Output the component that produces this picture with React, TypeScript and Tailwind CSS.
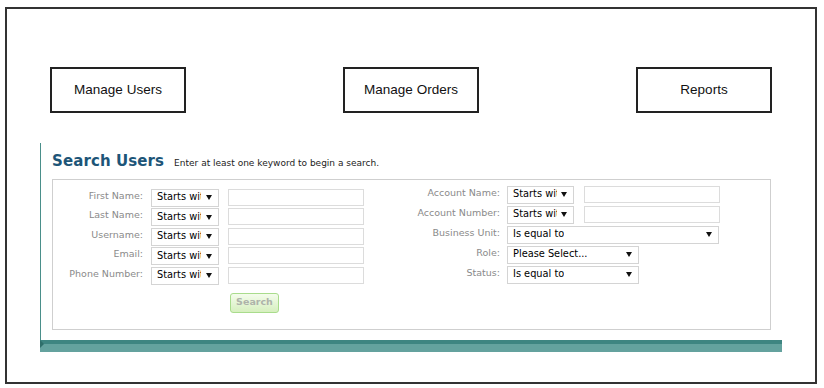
import React from "react";

const ui = { fontFamily: '"DejaVu Sans", Verdana, sans-serif' };
const nav = { fontFamily: '"Liberation Sans", Arial, sans-serif' };

function Caret() {
	return (
		<svg width="6" height="5" viewBox="0 0 6 5" className="shrink-0">
			<path d="M0 0H6L3 5Z" fill="#111" />
		</svg>
	);
}

function Dropdown({
	label,
	width,
	textWidth,
}: {
	label: string;
	width: string;
	textWidth?: string;
}) {
	return (
		<div
			className={`flex h-[18px] ${width} items-center justify-between border border-[#d4d4d4] bg-white pl-[5px] pr-[6px] text-[9.8px] text-black`}
		>
			<span className={`overflow-hidden whitespace-nowrap ${textWidth ?? ""}`}>
				{label}
			</span>
			<Caret />
		</div>
	);
}

function TextBox() {
	return <div className="h-[17px] w-[136px] border border-[#dcdcdc] bg-white" />;
}

const leftRows = ["First Name:", "Last Name:", "Username:", "Email:", "Phone Number:"];

export default function App() {
	return (
		<div className="h-[388px] w-[824px] bg-white pl-[5px] pt-[7px]">
			<div className="h-[377px] w-[812px] border-2 border-[#333]">
				<div
					className="flex justify-between pl-[43px] pr-[43px] pt-[58px] text-[13.5px] text-[#111]"
					style={nav}
				>
					{["Manage Users", "Manage Orders", "Reports"].map((t) => (
						<div
							key={t}
							className="flex h-[46px] w-[136px] items-center justify-center border-2 border-[#222]"
						>
							{t}
						</div>
					))}
				</div>

				<div className="ml-[33px] mt-[30px] w-[742px]" style={ui}>
					<div className="border-l border-[#4a8f8a] pb-[10px] pl-[11px] pt-[7px]">
						<div className="flex items-baseline">
							<h1 className="text-[15px] font-bold tracking-[0.1px] text-[#1d5578]">
								Search Users
							</h1>
							<span className="ml-[10px] text-[9px] text-[#222]">
								Enter at least one keyword to begin a search.
							</span>
						</div>

						<div className="mt-[6px] flex h-[151px] w-[719px] border border-[#cfcfcf] pt-[6px]">
							<div className="flex w-[348px] flex-col pt-[3px]">
								<div className="flex flex-col gap-[1.5px]">
									{leftRows.map((l) => (
										<div key={l} className="flex items-start">
											<div className="w-[90px] text-right text-[9.5px] text-[#8a8a8a]">
												{l}
											</div>
											<div className="ml-[8px]">
												<Dropdown
													label="Starts with"
													width="w-[68px]"
													textWidth="w-[44px]"
												/>
											</div>
											<div className="ml-[9px]">
												<TextBox />
											</div>
										</div>
									))}
								</div>
								<div className="mt-[8px] pl-[177px]">
									<div className="flex h-[20px] w-[49px] items-center justify-center rounded-[3px] border border-[#a9dc8c] bg-gradient-to-b from-[#f4fcec] to-[#d6efbf] text-[9.5px] font-bold text-[#aeb3aa]">
										Search
									</div>
								</div>
							</div>

							<div className="flex flex-col gap-[2px]">
								<div className="flex items-start">
									<div className="w-[99px] text-right text-[9.5px] text-[#8a8a8a]">
										Account Name:
									</div>
									<div className="ml-[7px]">
										<Dropdown
											label="Starts with"
											width="w-[67px]"
											textWidth="w-[44px]"
										/>
									</div>
									<div className="ml-[10px]">
										<TextBox />
									</div>
								</div>
								<div className="flex items-start">
									<div className="w-[99px] text-right text-[9.5px] text-[#8a8a8a]">
										Account Number:
									</div>
									<div className="ml-[7px]">
										<Dropdown
											label="Starts with"
											width="w-[67px]"
											textWidth="w-[44px]"
										/>
									</div>
									<div className="ml-[10px]">
										<TextBox />
									</div>
								</div>
								<div className="flex items-start">
									<div className="w-[99px] text-right text-[9.5px] text-[#8a8a8a]">
										Business Unit:
									</div>
									<div className="ml-[7px]">
										<Dropdown label="Is equal to" width="w-[212px]" />
									</div>
								</div>
								<div className="flex items-start">
									<div className="w-[99px] text-right text-[9.5px] text-[#8a8a8a]">
										Role:
									</div>
									<div className="ml-[7px]">
										<Dropdown label="Please Select..." width="w-[132px]" />
									</div>
								</div>
								<div className="flex items-start">
									<div className="w-[99px] text-right text-[9.5px] text-[#8a8a8a]">
										Status:
									</div>
									<div className="ml-[7px]">
										<Dropdown label="Is equal to" width="w-[132px]" />
									</div>
								</div>
							</div>
						</div>
					</div>
					<div className="relative h-[12px] w-[742px] border-t-4 border-[#3e8581] bg-[#64a29e]">
						<div className="absolute -top-[4px] left-0 h-0 w-0 border-y-[4px] border-l-[4px] border-y-transparent border-l-[#2f6e6a]" />
					</div>
				</div>
			</div>
		</div>
	);
}
